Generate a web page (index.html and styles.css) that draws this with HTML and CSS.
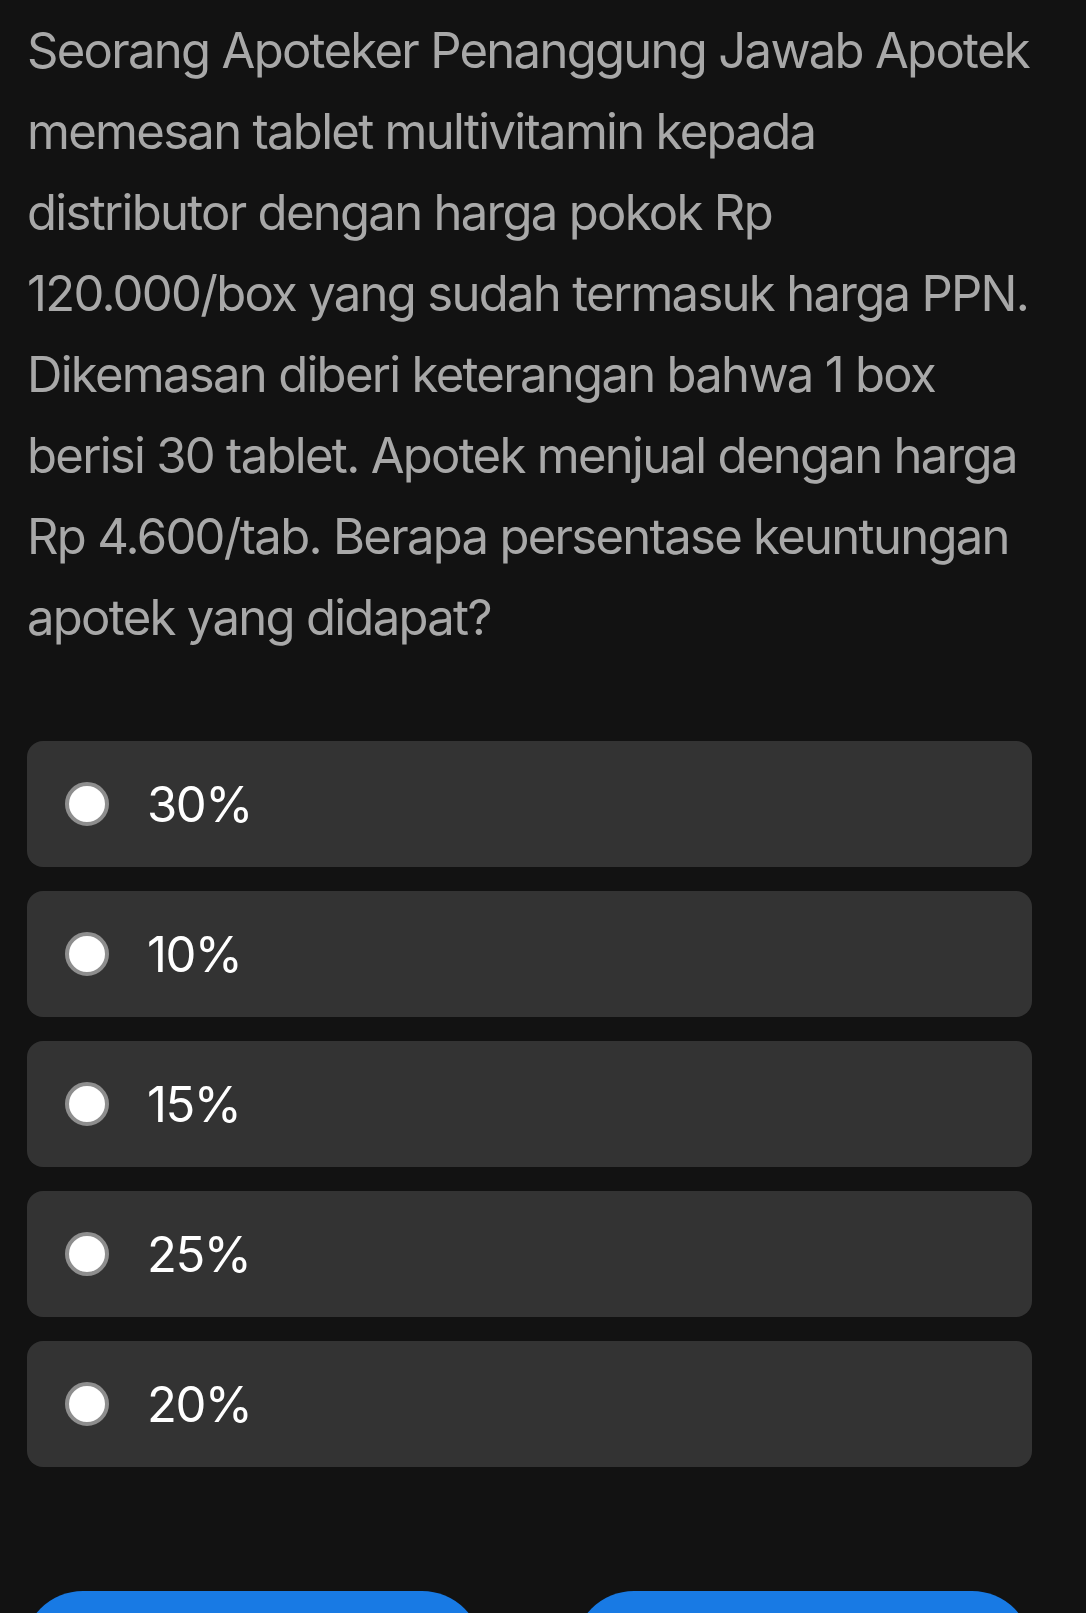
FILE: index.html
```html
<!DOCTYPE html>
<html lang="id">
<head>
  <meta charset="UTF-8">
  <title>Soal</title>
  <link rel="stylesheet" href="styles.css">
</head>
<body>
  <div class="container">
    <p class="question">Seorang Apoteker Penanggung Jawab Apotek<br>
      memesan tablet multivitamin kepada<br>
      distributor dengan harga pokok Rp<br>
      120.000/box yang sudah termasuk harga PPN.<br>
      Dikemasan diberi keterangan bahwa 1 box<br>
      berisi 30 tablet. Apotek menjual dengan harga<br>
      Rp 4.600/tab. Berapa persentase keuntungan<br>
      apotek yang didapat?</p>

    <div class="options">
      <div class="option"><span class="radio"></span><span class="label">30%</span></div>
      <div class="option"><span class="radio"></span><span class="label">10%</span></div>
      <div class="option"><span class="radio"></span><span class="label">15%</span></div>
      <div class="option"><span class="radio"></span><span class="label">25%</span></div>
      <div class="option"><span class="radio"></span><span class="label">20%</span></div>
    </div>

    <div class="nav">
      <button class="nav-btn" aria-label="Sebelumnya"></button>
      <button class="nav-btn" aria-label="Selanjutnya"></button>
    </div>
  </div>
</body>
</html>
```

FILE: styles.css
```css
body {
  margin: 0;
  background-color: #121212;
  font-family: Inter, "Noto Sans", sans-serif;
  overflow: hidden;
}

.container {
  padding: 10px 54px 0 27px;
}

.question {
  margin: 0 -30px 0 0;
  color: #a8a8a8;
  font-size: 49px;
  line-height: 81px;
  letter-spacing: -1.7px;
  white-space: nowrap;
}

.options {
  display: flex;
  flex-direction: column;
  gap: 24px;
  margin-top: 83px;
}

.option {
  display: flex;
  align-items: center;
  height: 126px;
  padding-left: 38px;
  background-color: #333333;
  border-radius: 16px;
}

.radio {
  width: 36px;
  height: 36px;
  border: 4px solid #8e8e8e;
  border-radius: 50%;
  background-color: #fff;
  margin-right: 38px;
}

.label {
  color: #fff;
  font-size: 49px;
  letter-spacing: -1.5px;
}

.nav {
  display: flex;
  gap: 92px;
  margin: 124px 0 0 -4px;
}

.nav-btn {
  flex: 1;
  height: 120px;
  border: none;
  border-radius: 60px;
  background-color: #187ae4;
  cursor: pointer;
}
```
